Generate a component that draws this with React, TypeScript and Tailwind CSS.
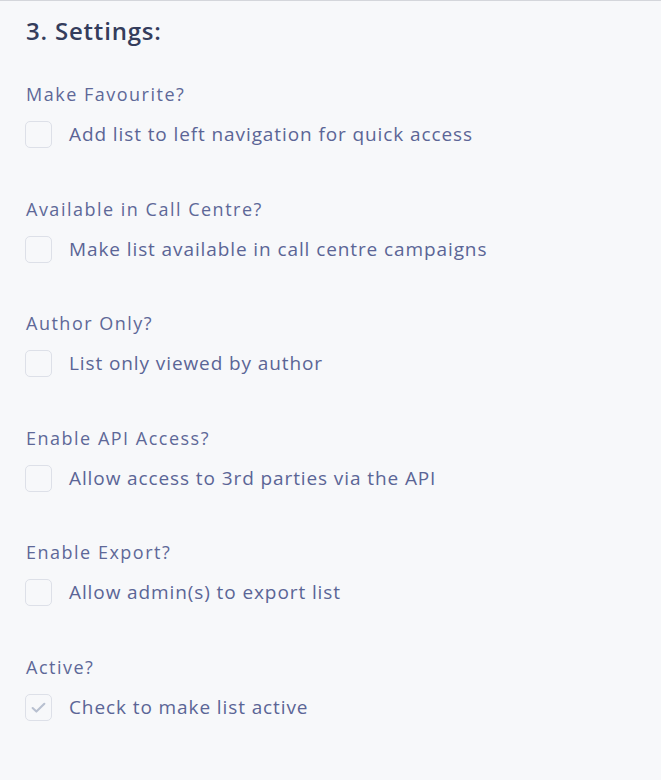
const settings = [
  { label: 'Make Favourite?', text: 'Add list to left navigation for quick access', checked: false },
  { label: 'Available in Call Centre?', text: 'Make list available in call centre campaigns', checked: false },
  { label: 'Author Only?', text: 'List only viewed by author', checked: false },
  { label: 'Enable API Access?', text: 'Allow access to 3rd parties via the API', checked: false },
  { label: 'Enable Export?', text: 'Allow admin(s) to export list', checked: false },
  { label: 'Active?', text: 'Check to make list active', checked: true },
]

export default function App() {
  return (
    <div
      className="min-h-[780px] w-[661px] bg-[#f7f8fa] border-t border-[#d4d6db] px-[25px] pt-[13px]"
      style={{ fontFamily: '"Open Sans", "Noto Sans", sans-serif' }}
    >
      <h2 className="text-[24px] leading-[34px] font-semibold tracking-[0.8px] text-[#343d5c] ml-[1px]">3. Settings:</h2>

      <div className="mt-[34px] flex flex-col gap-[48.6px]">
        {settings.map((s) => (
          <div key={s.label} className="flex flex-col">
            <p className="text-[18px] leading-[24px] tracking-[1.5px] text-[#5e6898] ml-[1px]">{s.label}</p>
            <label className="mt-[15px] flex items-center gap-[17px]">
              <span className="flex h-[27px] w-[27px] shrink-0 items-center justify-center rounded-[5px] border border-[#dde0e8] bg-[#f7f8fa]">
                {s.checked && (
                  <svg width="17" height="17" viewBox="0 0 16 16" fill="none">
                    <path d="M2.5 8.5l3.5 3.3L13.5 4.5" stroke="#b8c0d0" strokeWidth="2" strokeLinecap="round" strokeLinejoin="round" />
                  </svg>
                )}
              </span>
              <span className="text-[19px] leading-[27px] tracking-[0.9px] text-[#5b6596]">{s.text}</span>
            </label>
          </div>
        ))}
      </div>
    </div>
  )
}
